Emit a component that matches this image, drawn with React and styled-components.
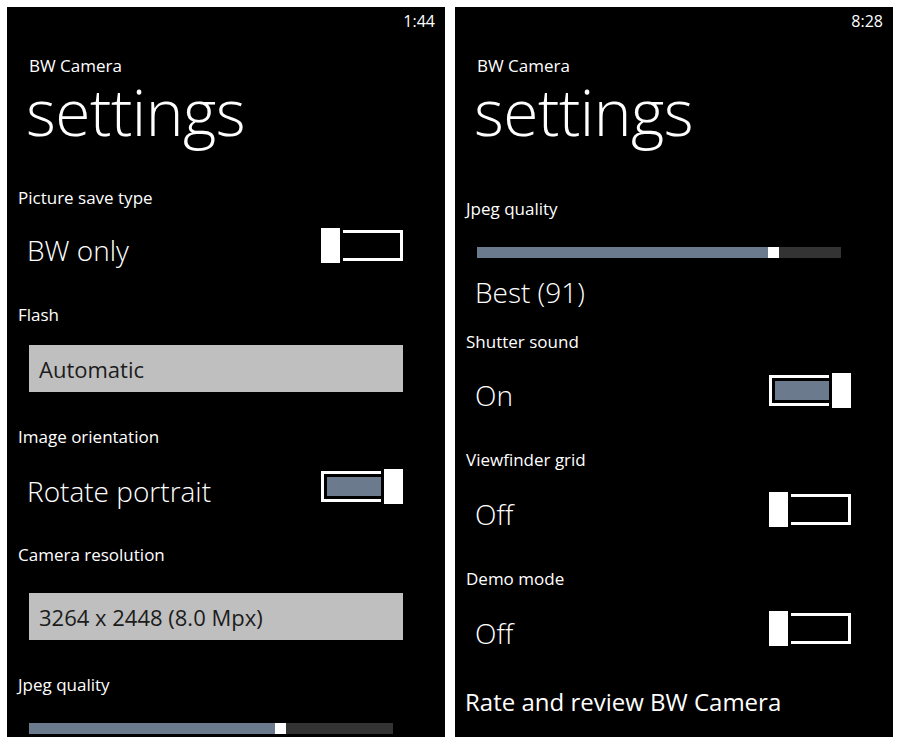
import styled, { createGlobalStyle } from "styled-components";

const GlobalStyle = createGlobalStyle`
  body {
    margin: 0;
    background: #fff;
    font-family: "Open Sans", "Noto Sans", "Liberation Sans", sans-serif;
  }
`;

const Page = styled.div`
  display: flex;
  gap: 10px;
  height: 745px;
  padding: 7px;
  box-sizing: border-box;
  background: #fff;
`;

const Phone = styled.div`
  display: flex;
  flex-direction: column;
  width: 438px;
  height: 730px;
  padding: 0 10px;
  box-sizing: border-box;
  overflow: hidden;
  background: #000;
  color: #fff;
`;

const StatusBar = styled.div`
  display: flex;
  justify-content: flex-end;
  height: 24px;
  padding-top: 4px;
  box-sizing: border-box;
  font-size: 16px;
  line-height: 20px;
`;

const AppName = styled.div`
  margin-top: 25px;
  padding-left: 12px;
  font-size: 17px;
  line-height: 20px;
`;

const PageTitle = styled.h1`
  margin: 0;
  padding-left: 9px;
  font-size: 64px;
  font-weight: 300;
  line-height: 72px;
  letter-spacing: -0.5px;
`;

const SettingBlock = styled.div`
  margin-top: ${(p) => p.$top}px;
`;

const Label = styled.div`
  padding-left: 1px;
  font-size: 17px;
  line-height: 20px;
`;

const Control = styled.div`
  margin-top: ${(p) => p.$gap}px;
`;

const ToggleRow = styled.div`
  display: flex;
  justify-content: space-between;
  align-items: flex-start;
  margin: 0 32px 0 10px;
`;

const ValueText = styled.div`
  padding-top: ${(p) => p.$pad || 0}px;
  margin-left: ${(p) => p.$indent || 0}px;
  font-size: 28px;
  font-weight: 300;
  line-height: 35px;
`;

const Toggle = styled.div`
  position: relative;
  width: 82px;
  height: 35px;
`;

const Track = styled.div`
  height: 31px;
  margin-top: 2px;
  padding: 3px;
  border: 3px solid #fff;
  box-sizing: border-box;
`;

const TrackFill = styled.div`
  height: 100%;
  background: ${(p) => (p.$on ? "#6b7a8c" : "transparent")};
`;

const Knob = styled.div`
  position: absolute;
  top: 0;
  ${(p) => (p.$on ? "right: 0;" : "left: 0;")}
  width: 19px;
  height: 35px;
  background: #fff;
  box-shadow: 0 0 0 3px #000;
`;

const Dropdown = styled.div`
  display: flex;
  align-items: center;
  height: 47px;
  margin: 0 32px 0 12px;
  padding-left: 10px;
  background: #bfbfbf;
  color: #1c1c1c;
  font-size: 22px;
`;

const Slider = styled.div`
  display: flex;
  height: 11px;
  margin: 0 42px 0 12px;
`;

const SliderFill = styled.div`
  width: ${(p) => p.$fill}%;
  background: #6b7a8c;
`;

const SliderThumb = styled.div`
  width: 11px;
  background: #fff;
`;

const SliderRest = styled.div`
  flex: 1;
  background: #333;
`;

const SliderValue = styled(ValueText)`
  margin-top: 17px;
`;

const RateLink = styled.div`
  margin-top: 36px;
  font-size: 24px;
  line-height: 30px;
`;

function Setting({ label, top, gap, children }) {
  return (
    <SettingBlock $top={top}>
      <Label>{label}</Label>
      <Control $gap={gap}>{children}</Control>
    </SettingBlock>
  );
}

function ToggleSwitch({ on }) {
  return (
    <Toggle>
      <Track>
        <TrackFill $on={on} />
      </Track>
      <Knob $on={on} />
    </Toggle>
  );
}

function ToggleSetting({ value, on }) {
  return (
    <ToggleRow>
      <ValueText $pad={5}>{value}</ValueText>
      <ToggleSwitch on={on} />
    </ToggleRow>
  );
}

function QualitySlider({ fill }) {
  return (
    <Slider>
      <SliderFill $fill={fill} />
      <SliderThumb />
      <SliderRest />
    </Slider>
  );
}

function Header({ time }) {
  return (
    <>
      <StatusBar>{time}</StatusBar>
      <AppName>BW Camera</AppName>
      <PageTitle>settings</PageTitle>
    </>
  );
}

export default function App() {
  return (
    <Page>
      <GlobalStyle />
      <Phone>
        <Header time="1:44" />
        <Setting label="Picture save type" top={40} gap={20}>
          <ToggleSetting value="BW only" on={false} />
        </Setting>
        <Setting label="Flash" top={37} gap={20}>
          <Dropdown>Automatic</Dropdown>
        </Setting>
        <Setting label="Image orientation" top={35} gap={22}>
          <ToggleSetting value="Rotate portrait" on />
        </Setting>
        <Setting label="Camera resolution" top={36} gap={28}>
          <Dropdown>3264 x 2448 (8.0 Mpx)</Dropdown>
        </Setting>
        <Setting label="Jpeg quality" top={35} gap={28}>
          <QualitySlider fill={67.6} />
        </Setting>
      </Phone>
      <Phone>
        <Header time="8:28" />
        <Setting label="Jpeg quality" top={51} gap={28}>
          <QualitySlider fill={79.9} />
          <SliderValue $indent={10}>Best (91)</SliderValue>
        </Setting>
        <Setting label="Shutter sound" top={22} gap={21}>
          <ToggleSetting value="On" on />
        </Setting>
        <Setting label="Viewfinder grid" top={37} gap={22}>
          <ToggleSetting value="Off" on={false} />
        </Setting>
        <Setting label="Demo mode" top={37} gap={22}>
          <ToggleSetting value="Off" on={false} />
        </Setting>
        <RateLink>Rate and review BW Camera</RateLink>
      </Phone>
    </Page>
  );
}
